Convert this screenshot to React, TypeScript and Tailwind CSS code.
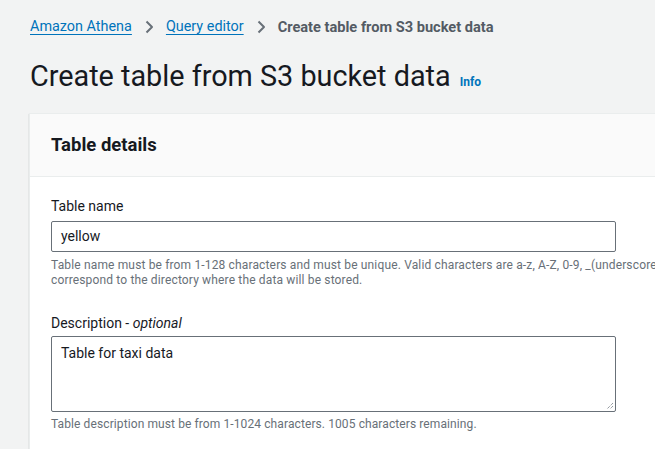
import React from 'react';

const Chevron = () => (
  <svg width="16" height="16" viewBox="0 0 16 16" className="text-[#687078]" fill="none">
    <path d="M5.5 2.5 11 8l-5.5 5.5" stroke="currentColor" strokeWidth="2" strokeLinejoin="round" />
  </svg>
);

const App = () => {
  return (
    <div
      className="h-[449px] w-[655px] overflow-hidden bg-[#f2f3f3] text-[#16191f]"
      style={{ fontFamily: 'Roboto, "Open Sans", sans-serif' }}
    >
      <div className="pl-[30px] pt-[17px]">
        <nav className="flex items-center gap-[9px] text-[14.4px] leading-[20px]">
          <a className="text-[#0073bb] underline underline-offset-[3px] decoration-[1px]">Amazon Athena</a>
          <Chevron />
          <a className="text-[#0073bb] underline underline-offset-[3px] decoration-[1px]">Query editor</a>
          <Chevron />
          <span className="text-[14.6px] font-bold text-[#545b64]">Create table from S3 bucket data</span>
        </nav>

        <div className="mt-[21px] flex items-baseline gap-[9px]">
          <h1 className="text-[28.8px] leading-[36px] font-normal">Create table from S3 bucket data</h1>
          <a className="text-[12px] font-bold text-[#0073bb]">Info</a>
        </div>
      </div>

      <div className="ml-[29px] mt-[19px] w-[700px] border-l border-t border-[#eaeded] bg-white shadow-[0_1px_1px_0_rgba(0,28,36,0.3)]">
        <div className="flex h-[63px] items-center border-b border-[#eaeded] bg-[#fafafa] px-[21px]">
          <h2 className="text-[18.5px] font-bold leading-[22px]">Table details</h2>
        </div>

        <div className="px-[21px] pt-[18px] pb-[30px]">
          <label className="block text-[14px] leading-[22px]">Table name</label>
          <div className="mt-[4px] flex h-[31px] w-[565px] items-center rounded-[2px] border border-[#687078] px-[9px] text-[14px]">
            yellow
          </div>
          <div className="mt-[6px] whitespace-nowrap text-[12px] leading-[15px] tracking-[0.15px] text-[#687078]">
            <div>Table name must be from 1-128 characters and must be unique. Valid characters are a-z, A-Z, 0-9, _(underscore) and must</div>
            <div>correspond to the directory where the data will be stored.</div>
          </div>

          <label className="mt-[24px] block text-[14px] leading-[22px]">
            Description - <i>optional</i>
          </label>
          <div className="relative mt-[2px] h-[76px] w-[565px] rounded-[2px] border border-[#687078] px-[9px] pt-[5px] text-[14px] leading-[22px]">
            Table for taxi data
            <svg className="absolute bottom-[1px] right-[1px]" width="9" height="9" viewBox="0 0 9 9">
              <path d="M8 2 2 8M8 5 5 8" stroke="#687078" strokeWidth="1" strokeDasharray="1 1" />
            </svg>
          </div>
          <div className="mt-[5px] whitespace-nowrap text-[12px] leading-[15px] tracking-[0.1px] text-[#687078]">
            Table description must be from 1-1024 characters. 1005 characters remaining.
          </div>
        </div>
      </div>
    </div>
  );
};

export default App;
